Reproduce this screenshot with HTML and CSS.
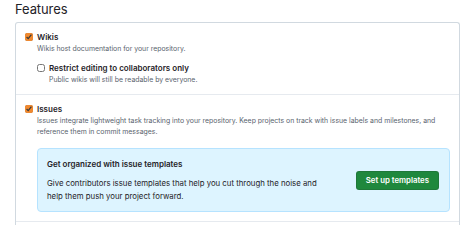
FILE: index.html
```
<!DOCTYPE html>
<html lang="en">
<head>
    <meta charset="UTF-8">
    <meta name="viewport" content="width=device-width, initial-scale=1.0">
    <title>Features - Settings</title>
    <link rel="stylesheet" href="styles.css">
</head>
<body>
    <div class="settings-page">
        <h2 class="subhead-heading">Features</h2>
        <div class="features-box">
            <!-- Wikis -->
            <div class="box-row">
                <div class="form-checkbox">
                    <input type="checkbox" id="wikis" checked>
                    <div class="checkbox-text">
                        <label for="wikis">Wikis</label>
                        <p class="note">Wikis host documentation for your repository.</p>
                    </div>
                </div>
                <div class="form-checkbox nested">
                    <input type="checkbox" id="restrictWiki">
                    <div class="checkbox-text">
                        <label for="restrictWiki">Restrict editing to collaborators only</label>
                        <p class="note">Public wikis will still be readable by everyone.</p>
                    </div>
                </div>
            </div>
            <!-- Issues -->
            <div class="box-row">
                <div class="form-checkbox">
                    <input type="checkbox" id="issues" checked>
                    <div class="checkbox-text">
                        <label for="issues">Issues</label>
                        <p class="note">Issues integrate lightweight task tracking into your repository. Keep projects on track with issue labels and milestones, and reference them in commit messages.</p>
                        <div class="flash-box">
                            <div class="flash-text">
                                <h4>Get organized with issue templates</h4>
                                <p>Give contributors issue templates that help you cut through the noise and help them push your project forward.</p>
                            </div>
                            <button type="button" class="btn-primary">Set up templates</button>
                        </div>
                    </div>
                </div>
            </div>
            <div class="box-row"></div>
        </div>
    </div>
</body>
</html>
```

FILE: styles.css
```
/* Color Palette */
:root {
    --color-fg: #1f2328;
    --color-muted: #59636e;
    --color-border: #d1d9e0;
    --color-border-muted: #e6eaef;
    --color-accent-bg: #ddf4ff;
    --color-accent-border: #b6e3ff;
    --color-green: #1f883d;
    --color-orange: #f0892f;
}

body {
    font-family: Inter, "Noto Sans", sans-serif;
    margin: 0;
    padding: 0;
    background-color: #ffffff;
    color: var(--color-fg);
}

.settings-page {
    padding: 0 14px 0 15px;
}

.subhead-heading {
    margin: 0;
    font-size: 13px;
    font-weight: 400;
    line-height: 18px;
    letter-spacing: -0.1px;
}

.features-box {
    margin-top: 4px;
    border: 1px solid var(--color-border);
    border-bottom: none;
    border-radius: 3px 3px 0 0;
}

.box-row {
    padding: 8px 9px 9px 9px;
    border-top: 1px solid var(--color-border-muted);
}
.box-row:first-child {
    border-top: none;
}

/* Checkbox rows */
.form-checkbox {
    display: flex;
    gap: 4px;
}
.form-checkbox input[type="checkbox"] {
    width: 8px;
    height: 8px;
    margin: 2px 0 0 0;
    flex-shrink: 0;
    accent-color: var(--color-orange);
}
.form-checkbox.nested {
    margin-top: 8px;
    margin-left: 12px;
}
.checkbox-text {
    flex: 1;
}
.checkbox-text label {
    display: block;
    font-size: 8px;
    font-weight: 600;
    line-height: 12px;
}
.note {
    margin: 0;
    font-size: 6.9px;
    line-height: 11px;
    color: var(--color-muted);
}

/* Blue info box */
.flash-box {
    display: flex;
    align-items: center;
    gap: 28px;
    margin-top: 11px;
    padding: 9px 10px 9px 9px;
    background-color: var(--color-accent-bg);
    border: 1px solid var(--color-accent-border);
    border-radius: 4px;
}
.flash-text {
    flex: 1;
}
.flash-text h4 {
    margin: 0 0 7px 0;
    font-size: 8px;
    font-weight: 600;
    line-height: 12px;
}
.flash-text p {
    margin: 0;
    font-size: 7.8px;
    line-height: 12.5px;
}
.btn-primary {
    font-family: Inter, "Noto Sans", sans-serif;
    font-size: 7.8px;
    font-weight: 600;
    color: #ffffff;
    background-color: var(--color-green);
    border: 1px solid rgba(31, 35, 40, 0.15);
    border-radius: 3px;
    padding: 0 9px;
    height: 19px;
    cursor: pointer;
}
```
